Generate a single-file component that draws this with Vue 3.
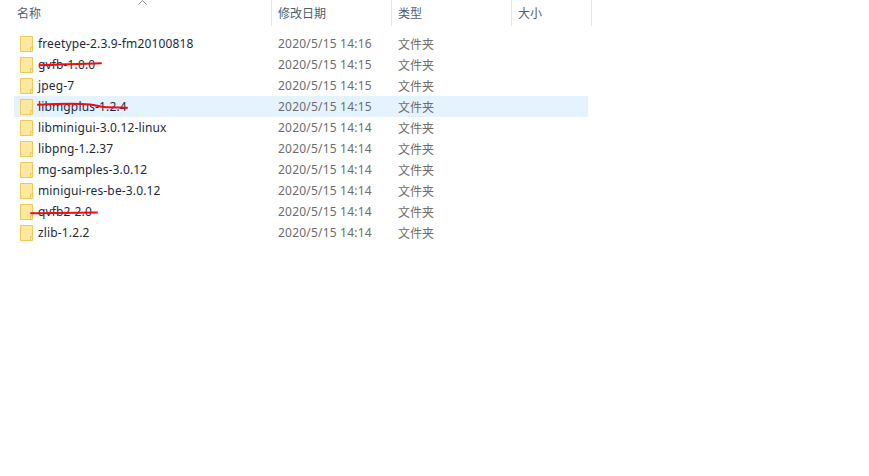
<template>
  <div class="page">
    <div class="head">
      <svg class="sort" width="9" height="5" viewBox="0 0 9 5"><path d="M.5 4.5 4.5 .5 8.5 4.5" fill="none" stroke="#7f858c" stroke-width="1" /></svg>
      <div class="col col-name">名称</div>
      <div class="col col-date">修改日期</div>
      <div class="col col-type">类型</div>
      <div class="col col-size">大小</div>
    </div>
    <div class="list">
      <div v-for="row in rows" :key="row.name" class="row" :class="{ active: row.active }">
        <svg class="folder" width="13" height="16" viewBox="0 0 13 16">
          <path d="M.5 .5h12v15h-12z" fill="#fde8a0" stroke="#f0c95c" />
          <path d="M10.5 15.5v-4h2" fill="none" stroke="#f0c95c" />
        </svg>
        <span class="name">{{ row.name }}</span>
        <span class="date">{{ row.date }}</span>
        <span class="type">文件夹</span>
        <svg v-if="row.strike" class="strike" :style="{ left: row.strike.left + 'px' }" :width="row.strike.w" height="10" :viewBox="`0 0 ${row.strike.w} 10`">
          <path :d="row.strike.d" fill="none" stroke="#f30a12" stroke-width="2" stroke-linecap="round" />
        </svg>
      </div>
    </div>
  </div>
</template>

<script setup>
const rows = [
  { name: 'freetype-2.3.9-fm20100818', date: '2020/5/15 14:16' },
  { name: 'gvfb-1.0.0', date: '2020/5/15 14:15', strike: { w: 64, d: 'M1 6.3 C20 6 40 4.6 62 4.3', left: 25 } },
  { name: 'jpeg-7', date: '2020/5/15 14:15' },
  { name: 'libmgplus-1.2.4', date: '2020/5/15 14:15', active: true, strike: { w: 92, d: 'M1 3.7 C25 2.6 42 2.6 53 3.4 C62 5 66 6.4 72 6.3 L90 6.7', left: 23 } },
  { name: 'libminigui-3.0.12-linux', date: '2020/5/15 14:14' },
  { name: 'libpng-1.2.37', date: '2020/5/15 14:14' },
  { name: 'mg-samples-3.0.12', date: '2020/5/15 14:14' },
  { name: 'minigui-res-be-3.0.12', date: '2020/5/15 14:14' },
  { name: 'qvfb2-2.0', date: '2020/5/15 14:14', strike: { w: 68, d: 'M1 7.3 C20 6.8 45 6.8 67 6.6', left: 16 } },
  { name: 'zlib-1.2.2', date: '2020/5/15 14:14' },
]
</script>

<style scoped>
.page{position:relative;width:869px;height:476px;background:#fff;overflow:hidden;font-family:"Noto Sans","Noto Sans CJK SC",sans-serif;font-size:12px;color:#1f2a38}
.head{display:flex;height:26px}
.sort{position:absolute;left:138px;top:0}
.col{height:26px;line-height:28px;box-sizing:border-box;border-right:1px solid #e5e5e5;padding-left:6px;color:#4c607a}
.col-name{width:272px;padding-left:17px}
.col-date{width:120px}
.col-type{width:120px}
.col-size{width:80px}
.list{display:flex;flex-direction:column;margin-top:7px;margin-left:14px;width:574px}
.row{position:relative;display:flex;align-items:center;height:21px}
.row.active{background:#e5f3ff}
.folder{margin-left:6px;flex:none}
.name{width:240px;margin-left:5px;flex:none;white-space:nowrap;color:#1d2a3a;letter-spacing:.14px}
.date{width:120px;flex:none;color:#6d6d6d;letter-spacing:.2px}
.type{flex:none;color:#6d6d6d}
.strike{position:absolute;top:5px}
</style>
